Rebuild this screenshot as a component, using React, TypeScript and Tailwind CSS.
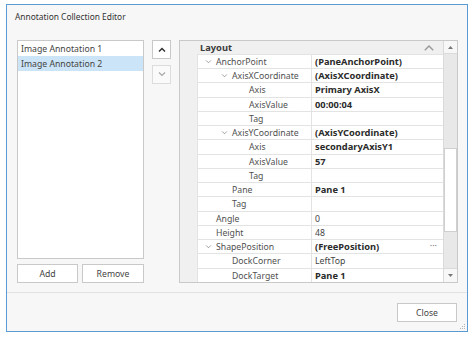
import React from 'react';

type Row = {
  name: string;
  value: string;
  level: 0 | 1 | 2;
  expand?: boolean;
  bold?: boolean;
  ellipsis?: boolean;
};

const rows: Row[] = [
  { name: 'AnchorPoint', value: '(PaneAnchorPoint)', level: 0, expand: true, bold: true },
  { name: 'AxisXCoordinate', value: '(AxisXCoordinate)', level: 1, expand: true, bold: true },
  { name: 'Axis', value: 'Primary AxisX', level: 2, bold: true },
  { name: 'AxisValue', value: '00:00:04', level: 2, bold: true },
  { name: 'Tag', value: '', level: 2 },
  { name: 'AxisYCoordinate', value: '(AxisYCoordinate)', level: 1, expand: true, bold: true },
  { name: 'Axis', value: 'secondaryAxisY1', level: 2, bold: true },
  { name: 'AxisValue', value: '57', level: 2, bold: true },
  { name: 'Tag', value: '', level: 2 },
  { name: 'Pane', value: 'Pane 1', level: 1, bold: true },
  { name: 'Tag', value: '', level: 1 },
  { name: 'Angle', value: '0', level: 0 },
  { name: 'Height', value: '48', level: 0 },
  { name: 'ShapePosition', value: '(FreePosition)', level: 0, expand: true, bold: true, ellipsis: true },
  { name: 'DockCorner', value: 'LeftTop', level: 1 },
  { name: 'DockTarget', value: 'Pane 1', level: 1, bold: true },
];

const indent = ['pl-[7px]', 'pl-[23px]', 'pl-[40px]'];

function Chevron({ up = false, className = '' }: { up?: boolean; className?: string }) {
  return (
    <svg width="8" height="5" viewBox="0 0 8 5" className={className}>
      <polyline
        points={up ? '1,4.5 4,1.5 7,4.5' : '1,0.5 4,3.5 7,0.5'}
        fill="none"
        stroke="currentColor"
        strokeWidth="1"
      />
    </svg>
  );
}

function PropertyGrid() {
  return (
    <div className="ml-[8px] w-[279px] h-[243px] border border-[#c9c9c9] bg-[#f0f0f0] flex overflow-hidden">
      <div className="flex-1 flex flex-col">
        {/* category header */}
        <div className="h-[13px] flex items-center pl-[20px] pr-[8px]">
          <span className="font-bold text-[9.3px] text-[#3b3b3b]">Layout</span>
          <Chevron up className="ml-auto text-[#9a9a9a] w-[12px] h-[7px]" />
        </div>
        {rows.map((r, i) => (
          <div key={i} className={`flex ${i % 4 === 2 ? 'h-[15px]' : 'h-[14px]'}`}>
            <div className="w-[17px] shrink-0" />
            <div
              className={`w-[114px] shrink-0 bg-white border-l border-t border-[#e3e3e3] flex items-center ${indent[r.level]} text-[#505050]`}
            >
              <span className="w-[11px] flex items-center">
                {r.expand && <Chevron className="text-[#8a8a8a] w-[7px] h-[4px]" />}
              </span>
              <span>{r.name}</span>
            </div>
            <div className="flex-1 bg-white border-l border-t border-[#e3e3e3] flex items-center pl-[3px] pr-[6px]">
              <span className={r.bold ? 'font-bold text-[9.3px] text-[#2b2b2b]' : 'text-[#444]'}>{r.value}</span>
              {r.ellipsis && <span className="ml-auto text-[#777] text-[9px] leading-none -mt-[3px]">···</span>}
            </div>
          </div>
        ))}
      </div>
      {/* scrollbar */}
      <div className="w-[14px] shrink-0 bg-[#e8e8e8] border-l border-[#dadada] flex flex-col">
        <div className="h-[13px] bg-[#f7f7f7] border-b border-[#dadada] flex items-center justify-center">
          <svg width="5" height="3" viewBox="0 0 5 3">
            <polygon points="0,3 2.5,0 5,3" fill="#777" />
          </svg>
        </div>
        <div className="mt-[94px] h-[84px] bg-white border border-[#cfcfcf]" />
        <div className="mt-auto h-[14px] bg-[#f7f7f7] border-t border-[#dadada] flex items-center justify-center">
          <svg width="5" height="3" viewBox="0 0 5 3">
            <polygon points="0,0 2.5,3 5,0" fill="#777" />
          </svg>
        </div>
      </div>
    </div>
  );
}

export default function App() {
  return (
    <div className="w-[474px] h-[340px] bg-white pt-[4px] pl-[6px] font-['Noto_Sans',_'Open_Sans',_sans-serif] text-[8.7px] leading-[12px] text-[#333]">
      <div className="w-[462px] h-[328px] border border-[#5b9bd5] bg-[#f7f7f7] flex flex-col">
        <div className="h-[35px] pl-[8px] pt-[6px] text-[8.4px] text-[#333]">Annotation Collection Editor</div>

        <div className="flex pl-[10px]">
          <div className="w-[127px] flex flex-col">
            <div className="h-[219px] bg-white border border-[#c9c9c9] text-[#444]">
              <div className="h-[15px] flex items-center pl-[3px]">Image Annotation 1</div>
              <div className="h-[15px] flex items-center pl-[3px] bg-[#cce4f7]">Image Annotation 2</div>
            </div>
            <div className="flex gap-[4px] mt-[5px]">
              <button className="w-[61px] h-[19px] bg-white border border-[#c9c9c9] text-[#444]">Add</button>
              <button className="w-[62px] h-[19px] bg-white border border-[#c9c9c9] text-[#444]">Remove</button>
            </div>
          </div>

          <div className="ml-[8px] flex flex-col gap-[6px]">
            <button className="w-[19px] h-[19px] bg-white border border-[#c9c9c9] flex items-center justify-center text-[#333]">
              <svg width="8" height="5" viewBox="0 0 8 5">
                <polyline points="1,4.5 4,1.5 7,4.5" fill="none" stroke="currentColor" strokeWidth="1.5" />
              </svg>
            </button>
            <button className="w-[19px] h-[19px] bg-[#fafafa] border border-[#dcdcdc] flex items-center justify-center text-[#a8a8a8]">
              <svg width="8" height="5" viewBox="0 0 8 5">
                <polyline points="1,0.5 4,3.5 7,0.5" fill="none" stroke="currentColor" strokeWidth="1.2" />
              </svg>
            </button>
          </div>

          <PropertyGrid />
        </div>

        <div className="mt-[9px] border-t border-[#e2e2e2] flex-1 flex flex-col pr-[10px] pt-[10px]">
          <div className="flex justify-end">
            <button className="w-[60px] h-[19px] bg-white border border-[#c9c9c9] text-[#444]">Close</button>
          </div>
          <div className="mt-auto flex justify-end -mr-[9px] mb-[1px]">
            <svg width="6" height="6" viewBox="0 0 6 6">
              <rect x="4" y="0" width="1" height="1" fill="#b5b5b5" />
              <rect x="2" y="2" width="1" height="1" fill="#b5b5b5" />
              <rect x="4" y="2" width="1" height="1" fill="#b5b5b5" />
              <rect x="0" y="4" width="1" height="1" fill="#b5b5b5" />
              <rect x="2" y="4" width="1" height="1" fill="#b5b5b5" />
              <rect x="4" y="4" width="1" height="1" fill="#b5b5b5" />
            </svg>
          </div>
        </div>
      </div>
    </div>
  );
}
